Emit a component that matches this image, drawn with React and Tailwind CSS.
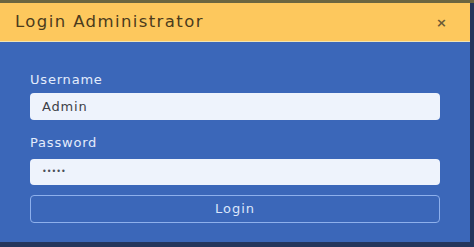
import React, { useState } from 'react';

const App = () => {
  const [username, setUsername] = useState('Admin');
  const [password, setPassword] = useState('admin');

  return (
    <div className="w-[474px] h-[247px] bg-[#24365c] overflow-hidden" style={{ fontFamily: '"DejaVu Sans", "Open Sans", sans-serif' }}>
      <div className="h-[3px] bg-[#6b6640]" />
      <div className="w-[470px]">
        {/* Header */}
        <div className="h-[39px] bg-[#fdc85d] flex items-center justify-between pl-[15px] pr-[23px] border-b border-[#efe3b4]">
          <h1 className="text-[16.5px] text-[#4b3b1c] tracking-[1.4px]">Login Administrator</h1>
          <button className="text-[#6b5a36] text-[13px] leading-none font-bold">×</button>
        </div>

        {/* Body */}
        <div className="h-[200px] bg-[#3b67b9] px-[30px] pt-[30px]">
          <label className="block text-[13px] text-[#e3ecfc] leading-[16px] tracking-[0.8px] mb-[5px]">Username</label>
          <input
            value={username}
            onChange={e => setUsername(e.target.value)}
            className="w-[410px] h-[27px] rounded-[4px] bg-[#eef3fc] px-[12px] text-[13px] tracking-[0.8px] text-[#3d4148] outline-none"
          />
          <label className="block text-[13px] text-[#e3ecfc] leading-[16px] tracking-[0.8px] mt-[15px] mb-[6px]">Password</label>
          <input
            type="password"
            value={password}
            onChange={e => setPassword(e.target.value)}
            className="w-[410px] h-[26px] rounded-[4px] bg-[#eef3fc] px-[12px] text-[8px] text-[#4a4f58] outline-none"
          />
          <button className="mt-[10px] w-[410px] h-[28px] rounded-[4px] border border-[#8eb0ec] text-[13px] tracking-[1px] text-[#dce6fb]">
            Login
          </button>
        </div>
      </div>
    </div>
  );
};

export default App;
